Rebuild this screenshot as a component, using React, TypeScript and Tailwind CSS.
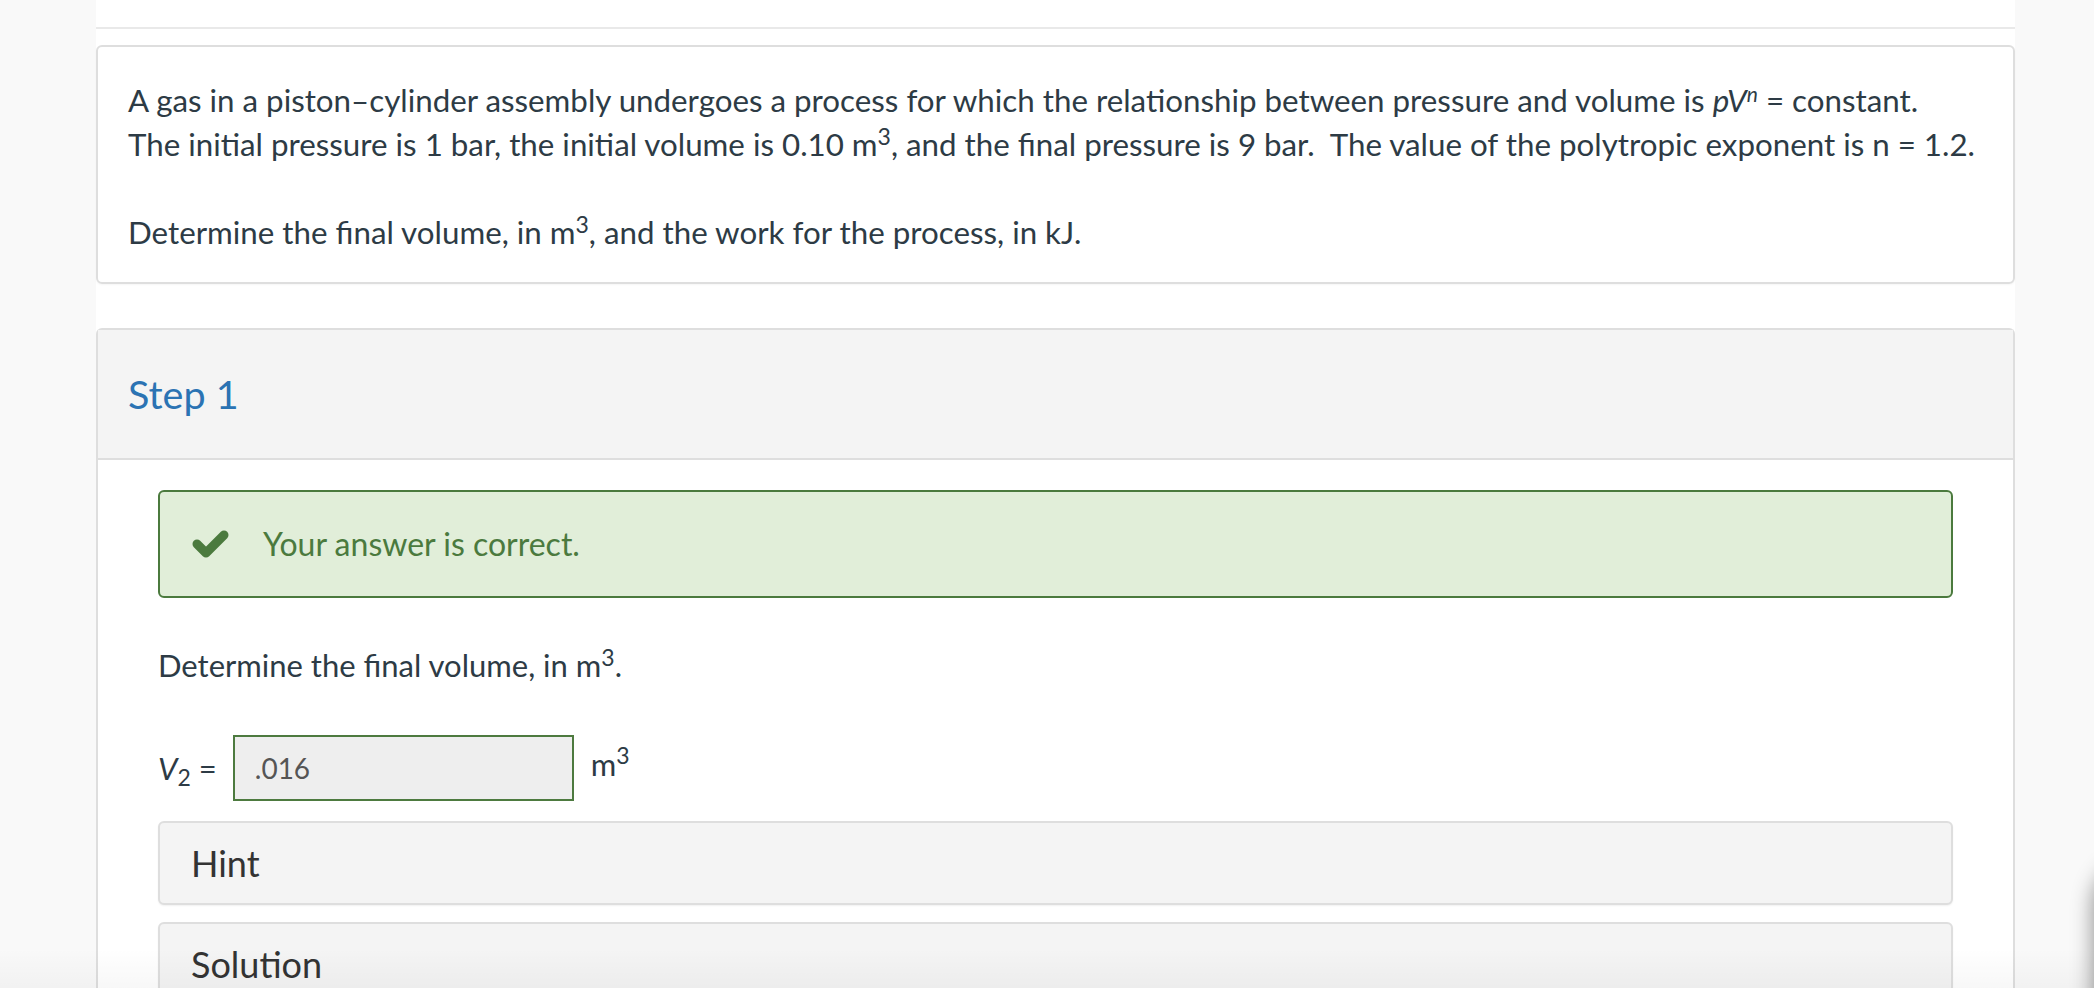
import React from 'react';

function Check() {
  return (
    <svg width="40" height="32" viewBox="0 0 40 32" className="shrink-0">
      <path d="M6 16 L15 25 L33 7" fill="none" stroke="#4b7a3e" strokeWidth="9" strokeLinecap="round" strokeLinejoin="round" />
    </svg>
  );
}

function Collapsible({ label }: { label: string }) {
  return (
    <div className="rounded-[6px] border-2 border-[#dedede] bg-[#f4f4f4] px-[31px] h-[84px] flex items-center shadow-[0_1px_2px_rgba(0,0,0,0.06)]">
      <span className="text-[36px] text-[#333333]">{label}</span>
    </div>
  );
}

export default function App() {
  return (
    <div className="relative h-[988px] overflow-hidden bg-[#f9f9f9] font-[family-name:Lato,sans-serif] text-[#2d3b45]">
      <div className="ml-[96px] w-[1919px] h-full bg-white">
        <div className="h-[27px]" />
        <div className="h-[2px] bg-[#e9e9e9]" />

        {/* Question */}
        <div className="mt-[16px] rounded-[6px] border-2 border-[#dedede] pl-[30px] pr-[10px] pt-[31px] pb-[28px] text-[31.3px] leading-[44px] shadow-[0_1px_2px_rgba(0,0,0,0.04)]">
          <p className="whitespace-nowrap">
            A gas in a piston–cylinder assembly undergoes a process for which the relationship between pressure and volume is{' '}
            <i>pV</i>
            <sup className="italic text-[21px] leading-none">n</sup> = constant.
          </p>
          <p className="whitespace-nowrap">
            The initial pressure is 1 bar, the initial volume is 0.10 m<sup className="text-[23px] leading-none">3</sup>, and the final pressure is 9 bar.&nbsp; The value of the polytropic exponent is n = 1.2.
          </p>
          <p className="mt-[44px] whitespace-nowrap">
            Determine the final volume, in m<sup className="text-[23px] leading-none">3</sup>, and the work for the process, in kJ.
          </p>
        </div>

        {/* Step 1 */}
        <div className="mt-[44px] rounded-t-[6px] border-2 border-b-0 border-[#dedede] h-[700px]">
          <div className="h-[130px] bg-[#f4f4f4] border-b-2 border-[#dedede] flex items-center px-[30px]">
            <h2 className="text-[39.5px] text-[#2b73b3]">Step 1</h2>
          </div>

          <div className="px-[60px] pt-[30px]">
            <div className="h-[108px] rounded-[6px] border-2 border-[#4b7a3e] bg-[#e1eed9] flex items-center pl-[31px] gap-[32px]">
              <Check />
              <span className="text-[32px] text-[#4b7a3e]">Your answer is correct.</span>
            </div>

            <p className="mt-[45px] text-[31px] leading-[44px]">
              Determine the final volume, in m<sup className="text-[23px] leading-none">3</sup>.
            </p>

            <div className="mt-[48px] flex items-center text-[31px]">
              <span>
                <i>V</i>
                <sub className="text-[23px] leading-none">2</sub> =
              </span>
              <div className="ml-[16px] w-[341px] h-[66px] border-2 border-[#4d7a3f] bg-[#eeeeee] flex items-center px-[20px] text-[28px] text-[#555555]">
                .016
              </div>
              <span className="ml-[17px] -mt-[8px]">
                m<sup className="text-[23px] leading-none">3</sup>
              </span>
            </div>

            <div className="mt-[20px] flex flex-col gap-[17px]">
              <Collapsible label="Hint" />
              <Collapsible label="Solution" />
            </div>
          </div>
        </div>
      </div>

      {/* bottom fade */}
      <div className="pointer-events-none absolute left-0 right-0 bottom-0 h-[40px] bg-gradient-to-b from-transparent to-black/[0.03]" />
      {/* offscreen floating button shadow */}
      <div className="absolute left-[2104px] top-[870px] w-[70px] h-[200px] rounded-full bg-white shadow-[0_0_22px_10px_rgba(0,0,0,0.45)]" />
    </div>
  );
}
